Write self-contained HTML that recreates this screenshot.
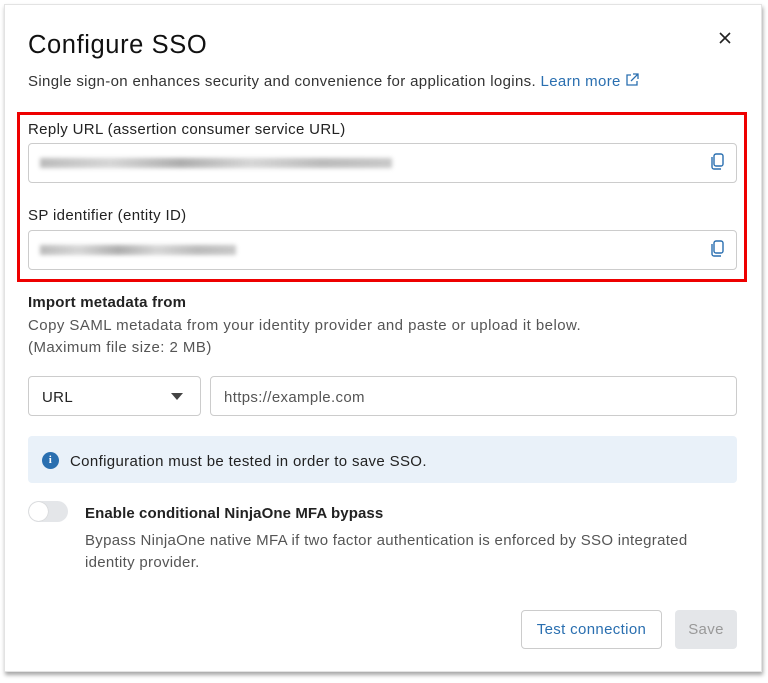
<!DOCTYPE html><html><head><style>
*{box-sizing:border-box;margin:0;padding:0}
body{width:768px;height:683px;background:#fff;font-family:"Liberation Sans",sans-serif;color:#1f2328;position:relative;overflow:hidden;letter-spacing:0.35px}
.dlg{position:absolute;left:4px;top:4px;width:758px;height:668px;border:1px solid #e3e3e3;box-shadow:1px 3px 4px rgba(0,0,0,.35);background:#fff}
.a{position:absolute;white-space:nowrap}
.inp{position:absolute;border:1px solid #ccc;border-radius:4px;background:#fff}
.blur{position:absolute;height:10px;background:linear-gradient(90deg,#aaa,#ccc,#999,#ccc,#aaa,#bbb);filter:blur(2px);opacity:.8}
</style></head><body>
<div class="dlg"></div>
<div class="a" style="left:28px;top:31px;font-size:25.5px;color:#111;letter-spacing:0.6px">Configure SSO</div>
<svg class="a" style="left:719px;top:32px" width="12" height="12" viewBox="0 0 12 12" stroke="#222" stroke-width="1.6"><path d="M1 1l10 10M11 1L1 11"/></svg>
<div class="a" style="left:28px;top:73px;font-size:15px;color:#333">Single sign-on enhances security and convenience for application logins. <span style="color:#2a6fb0">Learn more</span>
<svg width="14" height="14" viewBox="0 0 14 14" style="vertical-align:-1px" fill="none" stroke="#2a6fb0" stroke-width="1.3"><path d="M6 2H2v10h10V8M8 1h5v5M13 1L6 8"/></svg></div>
<div style="position:absolute;left:17px;top:112px;width:730px;height:170px;border:3px solid #e00"></div>
<div class="a" style="left:28px;top:121px;font-size:15px;color:#222">Reply URL (assertion consumer service URL)</div>
<div class="inp" style="left:28px;top:143px;width:709px;height:40px"></div>
<div class="blur" style="left:40px;top:158px;width:352px"></div>
<div class="a" style="left:28px;top:207px;font-size:15px;color:#222">SP identifier (entity ID)</div>
<div class="inp" style="left:28px;top:230px;width:709px;height:40px"></div>
<div class="blur" style="left:40px;top:245px;width:196px"></div>
<svg class="a" style="left:709px;top:153px" width="16" height="18" viewBox="0 0 16 18" fill="none" stroke="#2a6fb0" stroke-width="1.4"><rect x="5" y="1" width="9" height="12" rx="2"/><path d="M3 4v10a2 2 0 0 0 2 2h7"/></svg>
<svg class="a" style="left:709px;top:240px" width="16" height="18" viewBox="0 0 16 18" fill="none" stroke="#2a6fb0" stroke-width="1.4"><rect x="5" y="1" width="9" height="12" rx="2"/><path d="M3 4v10a2 2 0 0 0 2 2h7"/></svg>
<div class="a" style="left:28px;top:294px;font-size:15px;font-weight:bold;color:#222;letter-spacing:0.2px">Import metadata from</div>
<div class="a" style="left:28px;top:317px;font-size:15px;color:#555;letter-spacing:0.45px">Copy SAML metadata from your identity provider and paste or upload it below.</div>
<div class="a" style="left:28px;top:339px;font-size:15px;color:#555;letter-spacing:0.45px">(Maximum file size: 2 MB)</div>
<div class="inp" style="left:28px;top:376px;width:173px;height:40px"></div>
<div class="a" style="left:42px;top:389px;font-size:15px;color:#222">URL</div>
<div class="a" style="left:171px;top:393px;width:0;height:0;border-left:6px solid transparent;border-right:6px solid transparent;border-top:7px solid #444"></div>
<div class="inp" style="left:210px;top:376px;width:527px;height:40px"></div>
<div class="a" style="left:224px;top:389px;font-size:15px;color:#555">https://example.com</div>
<div style="position:absolute;left:28px;top:436px;width:709px;height:47px;background:#e9f1f9;border-radius:4px"></div>
<div class="a" style="left:42px;top:452px;width:17px;height:17px;border-radius:50%;background:#2a6fb0;color:#fff;font-size:11px;font-weight:bold;text-align:center;line-height:17px;font-family:'Liberation Serif',serif">i</div>
<div class="a" style="left:70px;top:453px;font-size:15px;color:#222">Configuration must be tested in order to save SSO.</div>
<div class="a" style="left:28px;top:501px;width:40px;height:21px;border-radius:11px;background:#e4e6e9"></div>
<div class="a" style="left:29px;top:502px;width:19px;height:19px;border-radius:50%;background:#fff;box-shadow:0 0 1px #aaa"></div>
<div class="a" style="left:85px;top:505px;font-size:15px;font-weight:bold;color:#222;letter-spacing:0.1px">Enable conditional NinjaOne MFA bypass</div>
<div class="a" style="left:85px;top:532px;font-size:15px;color:#555;letter-spacing:0.3px">Bypass NinjaOne native MFA if two factor authentication is enforced by SSO integrated</div>
<div class="a" style="left:85px;top:554px;font-size:15px;color:#555;letter-spacing:0.3px">identity provider.</div>
<div class="a" style="left:521px;top:610px;width:141px;height:39px;border:1px solid #ccc;border-radius:4px;color:#2a6fb0;font-size:15px;text-align:center;line-height:38px">Test connection</div>
<div class="a" style="left:675px;top:610px;width:62px;height:39px;border-radius:4px;background:#e4e6e9;color:#999;font-size:15px;text-align:center;line-height:40px">Save</div>
</body></html>
